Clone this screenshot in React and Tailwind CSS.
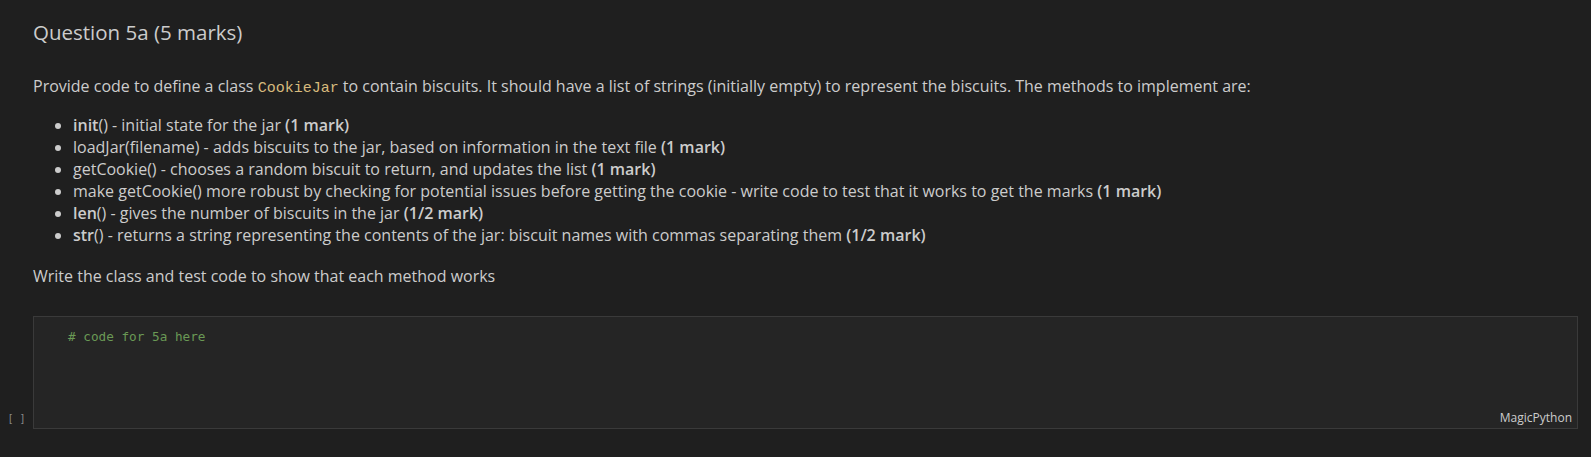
const items = [
  { b: 'init', rest: '() - initial state for the jar ', m: '(1 mark)' },
  { pre: 'loadJar(filename) - adds biscuits to the jar, based on information in the text file ', m: '(1 mark)' },
  { pre: 'getCookie() - chooses a random biscuit to return, and updates the list ', m: '(1 mark)' },
  { pre: 'make getCookie() more robust by checking for potential issues before getting the cookie - write code to test that it works to get the marks ', m: '(1 mark)' },
  { b: 'len', rest: '() - gives the number of biscuits in the jar ', m: '(1/2 mark)' },
  { b: 'str', rest: '() - returns a string representing the contents of the jar: biscuit names with commas separating them ', m: '(1/2 mark)' },
]

export default function App() {
  return (
    <div className="w-[1591px] h-[457px] bg-[#1f1f1f] text-[#cccccc] font-['Open_Sans',sans-serif] overflow-hidden">
      {/* markdown cell */}
      <div className="pl-[33px] pr-[13px] pt-[17px]">
        <h2 className="text-[20.5px] leading-[30px] text-[#cccccc]">Question 5a (5 marks)</h2>
        <p className="mt-[28px] text-[16px] leading-[22px]">
          Provide code to define a class{' '}
          <code className="font-['Liberation_Mono',monospace] text-[15px] text-[#d7ba7d]">CookieJar</code>{' '}
          to contain biscuits. It should have a list of strings (initially empty) to represent the biscuits. The methods to implement are:
        </p>
        <ul className="mt-[14px] text-[16px] leading-[22px] list-disc pl-[40px]">
          {items.map((it, i) => (
            <li key={i}>
              {it.b && <b className="font-semibold">{it.b}</b>}
              {it.rest}
              {it.pre}
              <b className="font-semibold">{it.m}</b>
            </li>
          ))}
        </ul>
        <p className="mt-[19px] text-[16px] leading-[22px]">Write the class and test code to show that each method works</p>
      </div>

      {/* code cell */}
      <div className="flex mt-[29px] pr-[13px]">
        <div className="w-[33px] flex items-end justify-center pb-[3px]">
          <span className="font-['DejaVu_Sans_Mono',monospace] text-[10px] text-[#8a8a8a]">[ ]</span>
        </div>
        <div className="flex-1 h-[113px] bg-[#252525] border border-[#3a3a3a] flex flex-col">
          <div className="pl-[34px] pt-[11px] font-['DejaVu_Sans_Mono',monospace] text-[12.7px] leading-[18px] text-[#6a9955]">
            # code for 5a here
          </div>
          <div className="mt-auto self-end pr-[5px] pb-[1px] text-[12px] text-[#cccccc]">MagicPython</div>
        </div>
      </div>
    </div>
  )
}
